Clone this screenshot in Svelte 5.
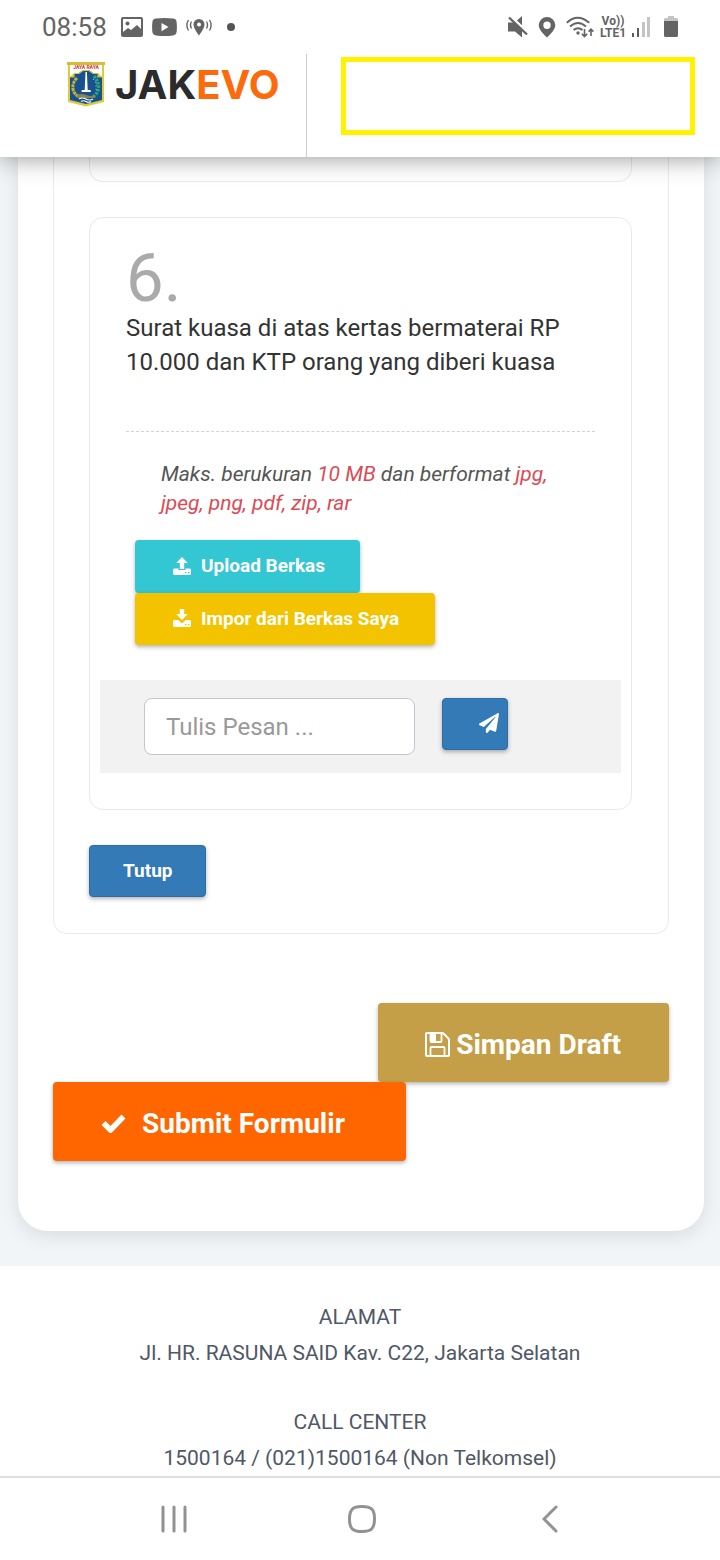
<script lang="ts">
    interface FooterBlock {
        title: string;
        text: string;
    }

    const formats = 'jpg, jpeg, png, pdf, zip, rar';
    const footer: FooterBlock[] = [
        { title: 'ALAMAT', text: 'Jl. HR. RASUNA SAID Kav. C22, Jakarta Selatan' },
        { title: 'CALL CENTER', text: '1500164 / (021)1500164 (Non Telkomsel)' }
    ];

    let message = $state('');
</script>

<div class="screen">
    <div class="status-bar">
        <div class="status-left">
            <span class="clock">08:58</span>
            <svg class="photo" width="22" height="20" viewBox="0 0 22 20">
                <rect x="1" y="1" width="20" height="18" rx="1" fill="none" stroke="#646464" stroke-width="2" />
                <circle cx="6.500" cy="6.500" r="2" fill="#646464" />
                <path d="M2 15l5-4 3 2 6-5 4 4v6H2z" fill="#646464" />
            </svg>
            <svg width="25" height="18" viewBox="0 0 25 18">
                <path d="M4 .6Q12.500-.4 21 .6q3.400.3 3.600 3.400.6 5 0 10-.3 3-3.600 3.400-8.500 1-17 0Q.7 17 .4 14q-.6-5 0-10Q.7.9 4 .6z" fill="#646464" />
                <path d="M9.500 5v8.200l7-4.100z" fill="#fff" />
            </svg>
            <svg width="26" height="18" viewBox="0 0 26 18">
                <path d="M13 1a5.500 5.500 0 0 0-5.500 5.500c0 4 5.500 11 5.500 11s5.500-7 5.500-11A5.500 5.500 0 0 0 13 1zm0 3.500a2 2 0 1 1 0 4 2 2 0 0 1 0-4z" fill="#646464" fill-rule="evenodd" />
                <path d="M5.500 3.500q-2 3.400 0 7M2.500 2q-3.200 5.200 0 10.500M20.500 3.500q2 3.400 0 7M23.500 2q3.200 5.200 0 10.500" fill="none" stroke="#646464" stroke-width="1.400" />
            </svg>
            <span class="dot"></span>
        </div>
        <div class="status-right">
            <svg width="20" height="22" viewBox="0 0 20 22">
                <path d="M0 6.500h5l3 1L14 13v8.500l-7-6H0zM9 4.500L14 0v9.300z" fill="#646464" />
                <path d="M1 1.500l18 17" stroke="#646464" stroke-width="2.400" />
            </svg>
            <svg width="18" height="22" viewBox="0 0 18 22">
                <path d="M9 1a8.300 8.300 0 0 0-8.300 8.300C.7 14.500 9 21.500 9 21.500s8.300-7 8.300-12.200A8.300 8.300 0 0 0 9 1zm0 4.500a3.700 3.700 0 1 1 0 7.400 3.700 3.700 0 0 1 0-7.400z" fill="#646464" fill-rule="evenodd" />
            </svg>
            <svg width="28" height="22" viewBox="0 0 28 22">
                <g fill="none" stroke="#646464" stroke-width="2">
                    <path d="M.8 6.800q10.700-10 22.400 0M4 10.500q8-7 16 0M7.500 14q4.500-3.600 9 0" />
                    <path d="M18.500 13v7.500M15.800 17.800l2.700 2.700 2.700-2.700M25 20v-7M22.600 15.600L25 13.200l2.400 2.400" stroke-width="1.600" />
                </g>
                <circle cx="12" cy="17" r="1.700" fill="#646464" />
            </svg>
            <div class="lte">
                <span>Vo))</span>
                <span>LTE1</span>
            </div>
            <svg width="19" height="22" viewBox="0 0 19 22">
                <path d="M1 17h2v4H1zM6 12h2v9H6z" fill="#5b5b5b" />
                <path d="M11 6h3v15h-3zM16 1h3v20h-3z" fill="#c4c4c4" />
            </svg>
            <svg class="battery" width="14" height="22" viewBox="0 0 14 22">
                <path d="M4 0h6v2h3l1 1v3H0V3l1-1h3z" fill="#c4c4c4" />
                <path d="M0 5h14v15l-1 1H1l-1-1z" fill="#646464" />
            </svg>
        </div>
    </div>

    <header>
        <a class="brand" href="#home" aria-label="JAKEVO">
            <svg width="38" height="45" viewBox="0 0 38 45">
                <path d="M1 2h36v38L19 44.500 1 40z" fill="#dfca3e" />
                <path d="M0 0h38v3H0z" fill="#d6bd35" />
                <path d="M3 3h32v12l-4-4h-5l-4-3h-6l-4 3H7l-4 4z" fill="#fff" />
                <path d="M3 15h4v-4h5l4-3h6l4 3h5v4h4v23l-16 4-16-4z" fill="#17518f" />
                <path d="M7 11.500h5l4-3h6l4 3h5v3.500h4M7 11.500V15H3" fill="none" stroke="#dbc23c" stroke-width="1.200" />
                <text x="19" y="6.800" text-anchor="middle">JAYA RAYA</text>
                <path d="M10 16q-5 5-4 11 1 6 7 8" fill="none" stroke="#cbb32e" stroke-width="3" stroke-dasharray="3 .7" />
                <path d="M27 14q6 7 4 14-1 4-5 7" fill="none" stroke="#2aa478" stroke-width="3.500" stroke-dasharray="2.500 1" />
                <path d="M26 17l4 5-2 4 3 4" fill="none" stroke="#d6efe5" stroke-width="1" stroke-dasharray="1 3" />
                <path d="M18.500 10h1.400l.8 18h3v2h-9v-2h3z" fill="#fff" />
                <path d="M10 33q4-2 9 0t9 0v3H10z" fill="#8a8546" />
                <path d="M12 37q3.500-2 7 0t7 0M14 39.500q2.500-1.500 5 0t5 0" fill="none" stroke="#fff" stroke-width="1.200" />
            </svg>
            <span class="wordmark">JAK<b>EVO</b></span>
        </a>
        <div class="account"><div class="highlight"></div></div>
    </header>

    <main>
        <div class="card">
            <section class="panel">
                <div class="item previous"></div>
                <article class="item">
                    <div class="number">6.</div>
                    <p class="title">Surat kuasa di atas kertas bermaterai RP 10.000 dan KTP orang yang diberi kuasa</p>
                    <hr />
                    <p class="note">Maks. berukuran <em>10 MB</em> dan berformat <em>{formats}</em></p>
                    <div class="uploads">
                        <button class="btn upload" type="button">
                            <svg width="18" height="18" viewBox="0 0 18 18" fill="currentColor">
                                <path d="M9 0l5.800 6h-3.600v6H6.800V6H3.200z" />
                                <path d="M1 11.500h4.500V13h7v-1.500H17l1 1V17l-1 1H1l-1-1v-4.500zM12 15v1h1.500v-1zm3 0v1h1.500v-1z" fill-rule="evenodd" />
                            </svg>
                            Upload Berkas
                        </button>
                        <button class="btn import" type="button">
                            <svg width="18" height="18" viewBox="0 0 18 18" fill="currentColor">
                                <path d="M6.800 0h4.400v5h3.600L9 11 3.200 5h3.600z" />
                                <path d="M1 11h4.300L9 14.500l3.700-3.500H17l1 1v5l-1 1H1l-1-1v-5zM12 15v1h1.500v-1zm3 0v1h1.500v-1z" fill-rule="evenodd" />
                            </svg>
                            Impor dari Berkas Saya
                        </button>
                    </div>
                    <form class="message" onsubmit={(e) => e.preventDefault()}>
                        <input type="text" placeholder="Tulis Pesan ..." aria-label="Tulis Pesan" bind:value={message} />
                        <button class="btn blue send" type="submit" aria-label="Kirim">
                            <svg width="20" height="20" viewBox="0 0 512 512" fill="currentColor">
                                <path d="M476 3.200L12.500 270.600c-18.100 10.400-15.800 35.600 2.200 43.200L121 358.400l287.300-253.200c5.500-4.900 13.300 2.600 8.600 8.300L176 407v80.500c0 23.600 28.500 32.900 42.500 15.800L282 426l124.600 52.200c14.200 6 30.400-2.900 33-18.200l72-432C515 7.800 493.300-6.800 476 3.200z" />
                            </svg>
                        </button>
                    </form>
                </article>
                <button class="btn blue close" type="button">Tutup</button>
            </section>

            <div class="actions">
                <button class="btn large draft" type="button">
                    <svg width="25" height="25" viewBox="0 0 25 25">
                        <path d="M1 2q0-1 1-1h15q1 0 2 1l4 4q1 1 1 2v15q0 1-1 1H2q-1 0-1-1z" fill="none" stroke="currentColor" stroke-width="2" />
                        <path d="M5.500 24v-8q0-1 1-1h12q1 0 1 1v8M5.500 1v8q0 1 1 1h9q1 0 1-1V1" fill="none" stroke="currentColor" stroke-width="1.800" />
                        <path d="M5.500 2H11v7H5.500z" fill="currentColor" />
                    </svg>
                    Simpan Draft
                </button>
                <button class="btn large submit" type="button">
                    <svg width="25" height="20" viewBox="0 0 25 20">
                        <path d="M2.500 10l7 7L22.500 3.500" fill="none" stroke="currentColor" stroke-width="5.500" />
                    </svg>
                    Submit Formulir
                </button>
            </div>
        </div>
    </main>

    <footer>
        {#each footer as block}
            <div>
                <p>{block.title}</p>
                <p>{block.text}</p>
            </div>
        {/each}
    </footer>

    <nav>
        <button type="button" aria-label="Recent apps">
            <svg width="26" height="28" viewBox="0 0 26 28">
                <path d="M2 2v24M13 2v24M24 2v24" />
            </svg>
        </button>
        <button type="button" aria-label="Home">
            <svg width="30" height="30" viewBox="0 0 30 30">
                <path d="M15 2.500q7 0 9.800 2.700T27.500 15q0 7-2.700 9.800T15 27.500q-7 0-9.800-2.700T2.500 15q0-7 2.700-9.800T15 2.500z" />
            </svg>
        </button>
        <button type="button" aria-label="Back">
            <svg width="16" height="28" viewBox="0 0 16 28">
                <path d="M14 2L2 14l12 12" />
            </svg>
        </button>
    </nav>
</div>

<style>
    :global(body) {
        margin: 0;
        background: #fff;
    }

    .screen {
        min-height: 100vh;
        display: flex;
        flex-direction: column;
        font-family: Roboto, 'Liberation Sans', sans-serif;
        color: #333;
    }

    svg {
        display: block;
        flex: none;
    }

    p {
        margin: 0;
    }

    button,
    input {
        font-family: inherit;
        box-sizing: border-box;
    }

    .status-bar {
        height: 54px;
        box-sizing: border-box;
        padding: 0 42px;
        display: flex;
        align-items: center;
        justify-content: space-between;
        color: #646464;
    }

    .status-left {
        display: flex;
        align-items: center;
        gap: 9px;
    }

    .status-right {
        display: flex;
        align-items: center;
        gap: 10px;
    }

    .clock {
        font-size: 26px;
    }

    .photo {
        margin-left: 5px;
    }

    .dot {
        width: 8px;
        height: 8px;
        margin-left: 6px;
        border-radius: 50%;
        background: #555;
    }

    .lte {
        width: 26px;
        margin: 0 -5px 0 -4px;
        display: flex;
        flex-direction: column;
        align-items: center;
        font-size: 12px;
        line-height: 12px;
        font-weight: 700;
    }

    .battery {
        margin-left: 4px;
    }

    header {
        height: 103px;
        display: flex;
        position: relative;
        z-index: 1;
        background: #fff;
        box-shadow: 0 0 24px rgba(0, 0, 0, 0.45);
        clip-path: inset(0 0 -40px 0);
    }

    .brand {
        width: 307px;
        box-sizing: border-box;
        padding: 8px 0 0 67px;
        display: flex;
        align-items: flex-start;
        gap: 10px;
        border-right: 1px solid #ccc;
        text-decoration: none;
    }

    .brand text {
        font-size: 5px;
        font-weight: 700;
        fill: #c33;
    }

    .wordmark {
        font-family: Inter, sans-serif;
        font-size: 40px;
        line-height: 45px;
        font-weight: 700;
        color: #2b2b2b;
    }

    .wordmark b {
        font-weight: 700;
        color: #fb6b0c;
    }

    .account {
        flex: 1;
        padding: 3px 25px 22px 34px;
        display: flex;
    }

    .highlight {
        flex: 1;
        border: 5px solid #fff200;
    }

    main {
        padding: 0 16px 35px 18px;
        background: #f1f5f8;
    }

    .card {
        padding: 0 35px 70px;
        border-radius: 0 0 30px 30px;
        background: #fff;
        box-shadow: 0 5px 20px rgba(0, 0, 0, 0.1);
    }

    .panel {
        padding: 0 36px 36px 35px;
        border: 1px solid #e7ebee;
        border-top: 0;
        border-radius: 0 0 14px 14px;
    }

    .item {
        margin-bottom: 35px;
        padding: 28px 10px 36px;
        border: 1px solid #e7ebee;
        border-radius: 14px;
    }

    .item.previous {
        height: 24px;
        padding: 0;
        border-top: 0;
        border-radius: 0 0 14px 14px;
    }

    .number {
        padding: 0 26px;
        font-size: 67px;
        line-height: 65px;
        color: #aaa;
    }

    .title {
        padding: 0 26px;
        font-size: 24px;
        line-height: 34px;
    }

    hr {
        margin: 52px 26px 28px;
        border: 0;
        border-top: 1px dashed #d3d3d3;
    }

    .note {
        padding: 0 61px;
        font-size: 21px;
        line-height: 29px;
        font-style: italic;
        color: #555;
    }

    .note em {
        color: #dc4b55;
    }

    .uploads {
        padding: 22px 35px 35px;
        display: flex;
        flex-direction: column;
        align-items: flex-start;
    }

    .btn {
        height: 52px;
        padding: 0 33px 2px;
        display: flex;
        align-items: center;
        gap: 10px;
        border: 0;
        border-radius: 4px;
        font-size: 19px;
        font-weight: 700;
        white-space: nowrap;
        color: #fff;
        box-shadow: 0 2px 4px rgba(0, 0, 0, 0.3);
        cursor: pointer;
    }

    .upload {
        height: 53px;
        padding: 0 35px 2px 38px;
        background: #33c6d3;
    }

    .import {
        padding: 0 36px 2px 38px;
        background: #f4c300;
    }

    .blue {
        border: 1px solid #2e6da4;
        background: #337ab7;
    }

    .message {
        padding: 18px 44px;
        display: flex;
        align-items: flex-start;
        gap: 27px;
        background: #f2f2f2;
    }

    .message input {
        width: 271px;
        height: 57px;
        padding: 0 21px;
        border: 1px solid #c2c6d0;
        border-radius: 8px;
        font-size: 24px;
        color: #555;
        background: #fff;
    }

    .message input::placeholder {
        color: #999;
    }

    .send {
        padding: 0 8px 2px 36px;
    }

    .actions {
        padding-top: 69px;
        display: flex;
        flex-direction: column;
        align-items: flex-start;
    }

    .large {
        height: 79px;
        padding: 3px 48px 0;
        font-size: 28px;
    }

    .draft {
        align-self: flex-end;
        padding-left: 47px;
        gap: 6px;
        background: #c49f47;
    }

    .submit {
        padding-right: 61px;
        gap: 16px;
        background: #ff6600;
    }

    footer {
        flex: 1;
        padding: 33px 20px 0;
        display: flex;
        flex-direction: column;
        gap: 33px;
        font-size: 21px;
        line-height: 36px;
        text-align: center;
        color: #4f5866;
    }

    nav {
        height: 82px;
        padding: 0 144px 0 148px;
        display: flex;
        align-items: center;
        justify-content: space-between;
        border-top: 2px solid #ddd;
    }

    nav button {
        width: 52px;
        height: 52px;
        padding: 0;
        display: flex;
        align-items: center;
        justify-content: center;
        border: 0;
        background: none;
    }

    nav path {
        fill: none;
        stroke: #929292;
        stroke-width: 3;
        stroke-linecap: round;
    }
</style>
